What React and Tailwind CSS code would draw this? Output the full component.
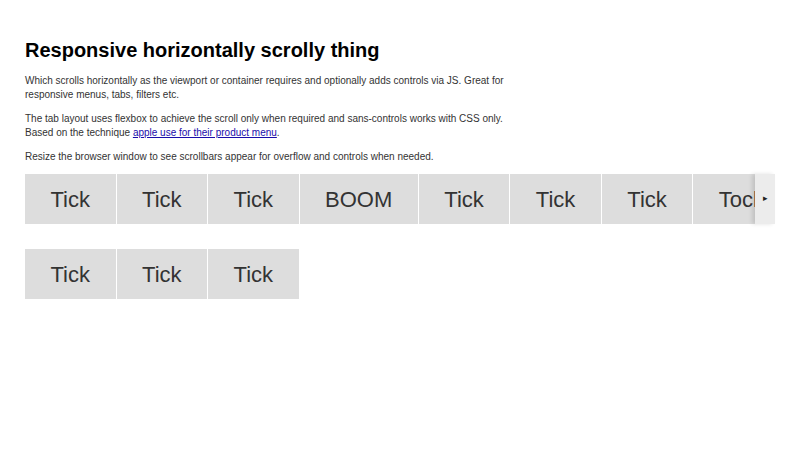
import React from 'react';

const Item = ({ label }) => (
    <div className="shrink-0 bg-[#dddddd] h-[50px] px-[25.5px] mr-px flex items-center justify-center text-[22px] text-[#333]">
        {label}
    </div>
);

const App = () => {
    const rowOne = ['Tick', 'Tick', 'Tick', 'BOOM', 'Tick', 'Tick', 'Tick', 'Tock', 'Tick', 'Tick'];
    const rowTwo = ['Tick', 'Tick', 'Tick'];

    return (
        <div className="min-h-screen bg-white px-[25px] pt-[38px] font-['Liberation_Sans',Arial,sans-serif] text-[#222]">
            <h1 className="text-[20px] leading-[24px] font-bold text-black">Responsive horizontally scrolly thing</h1>

            <div className="w-[490px] text-[10px] leading-[14px] text-[#333]">
                <p className="mt-[12px]">
                    Which scrolls horizontally as the viewport or container requires and optionally adds controls via JS. Great for responsive menus, tabs, filters etc.
                </p>
                <p className="mt-[10px]">
                    The tab layout uses flexbox to achieve the scroll only when required and sans-controls works with CSS only. Based on the technique{' '}
                    <a href="#" className="text-[#1a0dab] underline">apple use for their product menu</a>.
                </p>
                <p className="mt-[10px]">Resize the browser window to see scrollbars appear for overflow and controls when needed.</p>
            </div>

            {/* scrolling tabs with right control */}
            <div className="relative w-[750px] mt-[10px]">
                <div className="flex overflow-hidden">
                    {rowOne.map((label, i) => (
                        <Item key={i} label={label} />
                    ))}
                </div>
                <div className="absolute right-0 top-0 h-full w-[20px] bg-[#ececec] flex items-center justify-center text-[9px] text-[#222] shadow-[-3px_0_4px_rgba(0,0,0,0.12)]">
                    ▸
                </div>
            </div>

            <div className="flex mt-[25px]">
                {rowTwo.map((label, i) => (
                    <Item key={i} label={label} />
                ))}
            </div>
        </div>
    );
};

export default App;
